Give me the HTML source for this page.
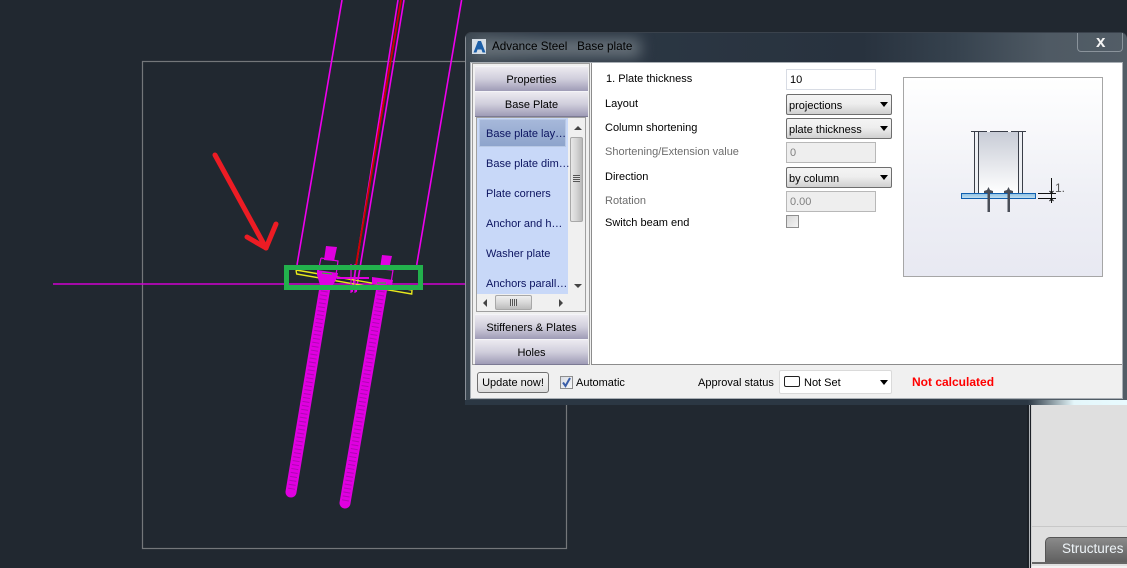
<!DOCTYPE html>
<html><head><meta charset="utf-8"><title>Advance Steel Base plate</title>
<style>
html,body{margin:0;padding:0;width:1127px;height:568px;overflow:hidden;background:#212830}
body{position:relative;font-family:"Liberation Sans",sans-serif;font-size:11px;color:#000}
.a,.t{position:absolute}
.t{white-space:nowrap;line-height:14px;margin-top:1px}
.g{color:#6d6d6d}
.nav{position:absolute;left:475px;width:113px;height:24px;border-top:1px solid #f4f4f8;border-bottom:1px solid #7c7a94;background:linear-gradient(#eceaf0,#d0cedc 50%,#9f9cb6);text-align:center;line-height:26px;font-size:11px}
.inp{position:absolute;left:786px;width:88px;height:19px;border:1px solid #d8dce4;background:#fff;line-height:20px;text-indent:3px}
.dis{background:#eeeeee;border-color:#b8b8b8;color:#808080}
.sel{position:absolute;left:786px;width:104px;height:19px;border:1px solid #6e6e6e;border-radius:2px;background:linear-gradient(#f4f4f4,#eeeeee 45%,#d0d0d0);line-height:22px;text-indent:2px}
.sel:after{content:"";position:absolute;right:3px;top:7px;border:4px solid transparent;border-top:5px solid #000;border-bottom:0}
</style></head><body>

<svg class="a" style="left:0;top:0" width="1127" height="568" viewBox="0 0 1127 568">
<rect x="142.5" y="61.5" width="424" height="487" fill="none" stroke="#74777a" stroke-width="1.2"/>
<line x1="53" y1="284" x2="466" y2="284" stroke="#d000d0" stroke-width="1.4"/>
<g stroke="#ee00ee" stroke-width="1.6" fill="none">
<line x1="342" y1="0" x2="297" y2="265"/>
<line x1="461.6" y1="0" x2="416.7" y2="265"/>
<line x1="398" y1="0" x2="352" y2="292"/>
<line x1="404" y1="0" x2="356" y2="292"/>
</g>
<line x1="401" y1="0" x2="356" y2="265" stroke="#d00000" stroke-width="1.8"/>
<g fill="none" stroke="#e8e81c" stroke-width="1.4">
<path d="M296 270 L296.7 274 L411.7 294 L412 290 L296 270"/>
</g>
<g stroke-linecap="round" fill="none">
<line x1="325" y1="287" x2="291" y2="492" stroke="#e000e0" stroke-width="11"/>
<line x1="382" y1="287" x2="345" y2="503" stroke="#e000e0" stroke-width="11"/>
<line x1="325" y1="287" x2="291" y2="492" stroke="#900a98" stroke-width="7" stroke-dasharray="1 3" stroke-opacity=".6" stroke-linecap="butt"/>
<line x1="382" y1="287" x2="345" y2="503" stroke="#900a98" stroke-width="7" stroke-dasharray="1 3" stroke-opacity=".6" stroke-linecap="butt"/>
</g>
<g fill="#e000e0">
<path d="M326 246 L337 247 L334 261 L324 260Z"/>
<path d="M382 255 L392 256 L389 269 L380 268Z"/>
<path d="M317 270 L338 273 L337 278 L333 285 L320 285 L317 275Z"/>
<path d="M372 277 L393 280 L392 285 L372 284Z"/>
<rect x="337" y="277" width="32" height="2"/>
</g>
<g fill="none" stroke="#e000e0" stroke-width="1.2">
<path d="M321 258 L338 261 L336 275 M321 258 L318 272"/>
<path d="M381 269 L393 270 L391 283"/>
<path d="M351 264 V293 M355 264 V293"/>
</g>
<g stroke="#20c820" stroke-width="1"><line x1="322" y1="273" x2="332" y2="274"/><line x1="377" y1="283" x2="386" y2="283"/></g>
<rect x="286.5" y="267.5" width="134" height="20" fill="none" stroke="#22b14c" stroke-width="5"/>
<g stroke="#ed1c24" stroke-width="5" fill="none" stroke-linecap="round" stroke-linejoin="round">
<path d="M215 155 L266 248"/>
<path d="M247 237 L266 248 L276 224"/>
</g>
</svg>

<!-- right panel behind dialog -->
<div class="a" style="left:1027px;top:400px;width:100px;height:168px;background:#1c2127"></div>
<div class="a" style="left:1029px;top:400px;width:98px;height:168px;border-left:1px solid #b0b4b8;background:#1c2127"></div>
<div class="a" style="left:1031px;top:400px;width:96px;height:166px;border-left:1px solid #d0d0d0;background:#dfdfdf;border-bottom:2px solid #f2f2f2"></div>
<div class="a" style="left:1032px;top:526px;width:95px;height:1px;background:#c8c8c8"></div>
<div class="a" style="left:1032px;top:562px;width:95px;height:2px;background:#666"></div>
<div class="a" style="left:1045px;top:537px;width:82px;height:25px;border-radius:5px 0 0 0;background:linear-gradient(#8a8a8a,#606060);border-top:1px solid #555;border-left:1px solid #555;box-sizing:border-box"></div>
<div class="t" style="left:1062px;top:541px;color:#eef4f8;font-size:13.5px">Structures</div>

<!-- dialog -->
<div class="a" style="left:465px;top:33px;width:662px;height:372px;border-radius:6px 6px 0 0;background:linear-gradient(90deg,#3d4852 0,#2c3845 12%,#28323e 60%,#36424e 74%,#4f5a64 88%,#525d66 100%);box-shadow:0 -1px 0 #3a424c;overflow:hidden">
<div class="a" style="left:0;top:0;width:1px;height:372px;background:#8a9098"></div>
<div class="a" style="left:10px;top:6px;width:165px;height:18px;background:#6a747c;filter:blur(7px)"></div>
<div class="a" style="left:0;top:367px;width:662px;height:5px;background:linear-gradient(90deg,#2b3743 0,#2b3743 85%,#e4f6fa 92%,#e8fbff 100%)"></div>
</div>
<div class="a" style="left:472px;top:39px;width:14px;height:15px;background:#d6dee6"></div>
<svg class="a" style="left:472px;top:39px" width="15" height="15" viewBox="0 0 15 15"><path d="M1.5 13.5 L6 2 H9 L13.5 13.5 H10.5 L9.5 10.5 H5.5 L4.5 13.5Z" fill="#1c5fa8"/></svg>
<div class="t" style="left:492px;top:39px;color:#000;font-size:11.7px">Advance Steel&nbsp;&nbsp; Base plate</div>

<div class="a" style="left:1077px;top:33px;width:44px;height:18px;border:1px solid #8a939b;border-top:0;border-radius:0 0 4px 4px"></div>
<div class="t" style="left:1096px;top:34px;color:#f4f4f4;font-size:17px;font-weight:bold">x</div>

<!-- client -->
<div class="a" style="left:470px;top:62px;width:653px;height:337px;background:#f0f0f0;border:1px solid #a8aeb4;box-sizing:border-box"></div>
<div class="a" style="left:472px;top:63px;width:118px;height:302px;border:1px solid #9c9c9c;box-sizing:border-box;background:#f0f0f0"></div>
<div class="a" style="left:591px;top:63px;width:531px;height:302px;background:#fff;border-left:1px solid #8c8c8c;border-bottom:1px solid #8c8c8c;box-sizing:border-box"></div>

<div class="nav" style="top:66px">Properties</div>
<div class="nav" style="top:91px">Base Plate</div>
<div class="nav" style="top:314px">Stiffeners &amp; Plates</div>
<div class="nav" style="top:339px">Holes</div>

<!-- list -->
<div class="a" style="left:476px;top:117px;width:110px;height:195px;background:#f0f0f0;border:1px solid #a0a0a0;box-sizing:border-box"></div>
<div class="a" style="left:477px;top:118px;width:91px;height:176px;background:#c8d8f8"></div>
<div class="a" style="left:479px;top:119px;width:85px;height:26px;background:linear-gradient(#a6b8da,#8ea4cc);border:1px solid #b8c8e4"></div>
<div class="t" style="left:486px;top:126px;color:#0c1460">Base plate lay…</div>
<div class="t" style="left:486px;top:156px;color:#0c1460">Base plate dim…</div>
<div class="t" style="left:486px;top:186px;color:#0c1460">Plate corners</div>
<div class="t" style="left:486px;top:216px;color:#0c1460">Anchor and h…</div>
<div class="t" style="left:486px;top:246px;color:#0c1460">Washer plate</div>
<div class="t" style="left:486px;top:276px;color:#0c1460">Anchors parall…</div>

<!-- scrollbars -->
<div class="a" style="left:569px;top:118px;width:16px;height:176px;background:#f0f0f0"></div>
<div class="a" style="left:570px;top:137px;width:13px;height:85px;background:linear-gradient(90deg,#e8e8e8,#d4d4d4 50%,#b8b8b8);border:1px solid #a8a8a8;box-sizing:border-box;border-radius:2px"></div>
<div class="a" style="left:573px;top:175px;width:7px;height:7px;background:repeating-linear-gradient(#555 0,#555 1px,#ddd 1px,#ddd 2px)"></div>
<div class="a" style="left:574px;top:126px;border:4px solid transparent;border-bottom:4px solid #444;border-top:0"></div>
<div class="a" style="left:574px;top:284px;border:4px solid transparent;border-top:4px solid #444;border-bottom:0"></div>
<div class="a" style="left:477px;top:295px;width:91px;height:16px;background:#f0f0f0"></div>
<div class="a" style="left:495px;top:295px;width:37px;height:15px;background:linear-gradient(#efefef,#d8d8d8 50%,#bcbcbc);border:1px solid #a8a8a8;box-sizing:border-box;border-radius:2px"></div>
<div class="a" style="left:510px;top:299px;width:7px;height:7px;background:repeating-linear-gradient(90deg,#555 0,#555 1px,#ddd 1px,#ddd 2px)"></div>
<div class="a" style="left:483px;top:299px;border:4px solid transparent;border-right:4px solid #444;border-left:0"></div>
<div class="a" style="left:559px;top:299px;border:4px solid transparent;border-left:4px solid #444;border-right:0"></div>

<!-- form -->
<div class="t" style="left:606px;top:71px">1. Plate thickness</div>
<div class="t" style="left:605px;top:96px">Layout</div>
<div class="t" style="left:605px;top:120px">Column shortening</div>
<div class="t g" style="left:605px;top:144px">Shortening/Extension value</div>
<div class="t" style="left:605px;top:169px">Direction</div>
<div class="t g" style="left:605px;top:193px">Rotation</div>
<div class="t" style="left:605px;top:215px">Switch beam end</div>

<div class="inp" style="top:69px">10</div>
<div class="sel" style="top:94px">projections</div>
<div class="sel" style="top:118px">plate thickness</div>
<div class="inp dis" style="top:142px">0</div>
<div class="sel" style="top:167px">by column</div>
<div class="inp dis" style="top:191px">0.00</div>
<div class="a" style="left:786px;top:215px;width:11px;height:11px;border:1px solid #8e8e8e;background:linear-gradient(135deg,#d8d8d8,#f4f4f4)"></div>

<!-- preview -->
<div class="a" style="left:903px;top:77px;width:198px;height:198px;border:1px solid #a6a6a6;background:linear-gradient(#ffffff,#eeeff5 60%,#e8e9f2)"></div>
<svg class="a" style="left:903px;top:77px" width="200" height="200" viewBox="903 77 200 200">
<defs>
<linearGradient id="w" x1="0" y1="0" x2="0" y2="1"><stop offset="0" stop-color="#c8ccd6"/><stop offset="1" stop-color="#ffffff"/></linearGradient>
<linearGradient id="p" x1="0" y1="0" x2="0" y2="1"><stop offset="0" stop-color="#8cc0e4"/><stop offset="1" stop-color="#c4e0f0"/></linearGradient>
</defs>
<rect x="979" y="132" width="39" height="61" fill="url(#w)"/>
<rect x="975" y="132" width="4" height="61" fill="#eef0f4"/><rect x="1018" y="132" width="4" height="61" fill="#eef0f4"/>
<g stroke="#3a3e48" stroke-width="1" fill="none">
<path d="M971 131.5H987M990 131.5H1008M1011 131.5H1026"/>
<path d="M974.5 132V193M978.5 132V193M1018.5 132V193M1022.5 132V193"/>
</g>
<rect x="961.5" y="193.5" width="74" height="5" fill="url(#p)" stroke="#1060b0" stroke-width="1"/>
<g fill="#4a4e58">
<path d="M984 193V191L987 190L988.5 187L990 190L993 191V193Z"/>
<path d="M1004 193V191L1007 190L1008.5 187L1010 190L1013 191V193Z"/>
<rect x="987.5" y="193" width="2.5" height="19"/><rect x="1007.5" y="193" width="2.5" height="19"/>
</g>
<g stroke="#111" stroke-width="1" fill="none">
<path d="M1038 193.5H1056M1038 198.5H1056M1051.5 178V203"/>
<path d="M1049.5 191L1051.5 193L1053.5 191M1049.5 201L1051.5 199L1053.5 201"/>
</g>
<text x="1055" y="192" font-family="Liberation Sans" font-size="12" fill="#555">1.</text>
</svg>

<!-- bottom -->
<div class="a" style="left:477px;top:372px;width:70px;height:19px;border:1px solid #707070;border-radius:3px;background:linear-gradient(#f4f4f4,#ececec 50%,#dcdcdc);text-align:center;line-height:21px">Update now!</div>
<div class="a" style="left:560px;top:376px;width:11px;height:11px;border:1px solid #8e8e8e;background:linear-gradient(135deg,#d8dce4,#f8f8f8)"></div>
<svg class="a" style="left:560px;top:376px" width="13" height="13" viewBox="0 0 13 13"><path d="M3 6.5L5.5 10L10 2" fill="none" stroke="#3a5ea8" stroke-width="2"/></svg>
<div class="t" style="left:576px;top:375px">Automatic</div>
<div class="t" style="left:698px;top:375px">Approval status</div>
<div class="a" style="left:779px;top:370px;width:111px;height:22px;background:#fff;border:1px solid #dadada;border-radius:2px"></div>
<div class="a" style="left:784px;top:376px;width:14px;height:9px;border:1px solid #222;border-radius:2px;background:#fff"></div>
<div class="t" style="left:804px;top:375px">Not Set</div>
<div class="a" style="left:880px;top:380px;border:4px solid transparent;border-top:5px solid #000;border-bottom:0"></div>
<div class="t" style="left:912px;top:374px;color:#ff0000;font-weight:bold;font-size:12px">Not calculated</div>
</body></html>
